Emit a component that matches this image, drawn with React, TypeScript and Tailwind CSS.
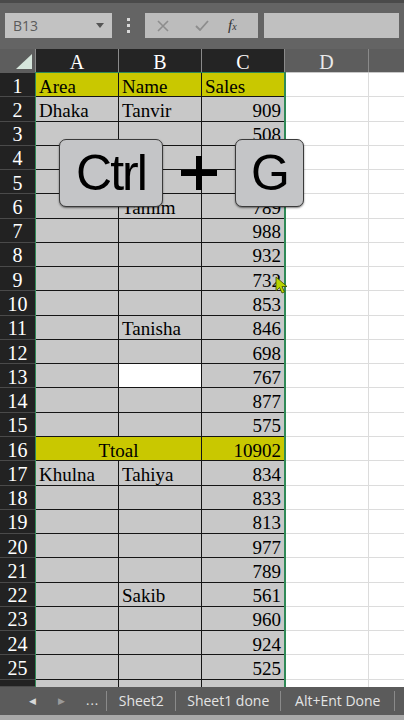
import React from 'react';

const SERIF = { fontFamily: '"Liberation Serif", "Times New Roman", serif' };
const SANS = { fontFamily: '"Open Sans", "Noto Sans", sans-serif' };

type Row = { a?: string; b?: string; c?: string; kind?: 'head' | 'total' };

const ROWS: Row[] = [
  { a: 'Area', b: 'Name', c: 'Sales', kind: 'head' },
  { a: 'Dhaka', b: 'Tanvir', c: '909' },
  { c: '508' },
  {},
  {},
  { b: 'Tamim', c: '789' },
  { c: '988' },
  { c: '932' },
  { c: '732' },
  { c: '853' },
  { b: 'Tanisha', c: '846' },
  { c: '698' },
  { c: '767' },
  { c: '877' },
  { c: '575' },
  { a: 'Ttoal', c: '10902', kind: 'total' },
  { a: 'Khulna', b: 'Tahiya', c: '834' },
  { c: '833' },
  { c: '813' },
  { c: '977' },
  { c: '789' },
  { b: 'Sakib', c: '561' },
  { c: '960' },
  { c: '924' },
  { c: '525' },
];

function RowHeader({ n, partial }: { n?: number; partial?: boolean }) {
  return (
    <div
      className={`flex w-[35px] shrink-0 items-center justify-center border-b border-[#4a4a4a] bg-[#222222] pt-[2px] text-[20px] leading-none text-white ${partial ? 'h-[7px]' : 'h-full'}`}
      style={SERIF}
    >
      {n}
    </div>
  );
}

function DataRow({ n, row }: { n: number; row: Row }) {
  const yellow = row.kind === 'head' || row.kind === 'total';
  const fill = yellow ? 'bg-[#c9c800]' : 'bg-[#c8c8c8]';
  const cell = `h-full shrink-0 border-r border-b border-[#151515] ${fill} px-[3px] pt-[3px] flex items-center text-[19px] leading-none text-black overflow-hidden whitespace-nowrap`;
  return (
    <div className="flex h-[24.28px] shrink-0" style={SERIF}>
      <RowHeader n={n} />
      <div className="h-full w-[1px] shrink-0 bg-[#2f8a57]" />
      {row.kind === 'total' ? (
        <div className={`${cell} w-[166px] justify-center`}>{row.a}</div>
      ) : (
        <>
          <div className={`${cell} w-[83px]`}>{row.a}</div>
          <div
            className={`${cell} w-[83px] ${n === 13 ? '!bg-white' : ''}`}
          >
            {row.b}
          </div>
        </>
      )}
      <div
        className={`${cell} w-[82px] border-r-0 ${row.kind === 'head' ? 'justify-start' : 'justify-end'}`}
      >
        {row.c}
      </div>
      <div className="h-full w-[2px] shrink-0 bg-[#2f8a57]" />
      <div className="h-full w-[83px] shrink-0 border-r border-b border-[#dcdcdc] bg-white" />
      <div className="h-full flex-1 border-b border-[#dcdcdc] bg-white" />
    </div>
  );
}

function Key({ label, w }: { label: string; w: string }) {
  return (
    <div
      className={`flex h-[68px] ${w} items-center justify-center rounded-[7px] border border-[#3a3a3a] bg-[#c4c5c7] text-[50px] leading-none tracking-[-2px] text-black shadow-[0_1px_2px_rgba(0,0,0,0.5)]`}
      style={{ fontFamily: '"Liberation Sans", Arial, sans-serif' }}
    >
      {label}
    </div>
  );
}

export default function App() {
  return (
    <div className="relative h-[720px] w-[404px] overflow-hidden bg-[#646464]">
      {/* formula bar */}
      <div className="h-[3px] bg-[#4a4a4a]" />
      <div className="flex h-[46px] items-start px-[5px] pt-[10px]">
        <div
          className="flex h-[25px] w-[107px] items-center justify-between bg-[#c2c2c2] px-[8px] text-[14px] text-[#5b5b5b]"
          style={SANS}
        >
          <span>B13</span>
          <svg width="8" height="5" viewBox="0 0 8 5">
            <path d="M0 0h8L4 5z" fill="#555" />
          </svg>
        </div>
        <div className="flex h-[25px] w-[33px] flex-col items-center justify-center gap-[3px]">
          <span className="block h-[3px] w-[3px] bg-[#d8d8d8]" />
          <span className="block h-[3px] w-[3px] bg-[#d8d8d8]" />
          <span className="block h-[3px] w-[3px] bg-[#d8d8d8]" />
        </div>
        <div className="flex h-[25px] w-[113px] items-center bg-[#bcbcbc]">
          <svg className="ml-[12px]" width="12" height="12" viewBox="0 0 12 12">
            <path d="M1 1l10 10M11 1L1 11" stroke="#8d8d8d" strokeWidth="1.6" />
          </svg>
          <svg className="ml-[26px]" width="14" height="11" viewBox="0 0 14 11">
            <path d="M1 6l4 4 8-9" stroke="#8d8d8d" strokeWidth="1.8" fill="none" />
          </svg>
          <span className="ml-[19px] text-[15px] italic text-[#333]" style={SERIF}>
            f<span className="text-[10px]">x</span>
          </span>
        </div>
        <div className="ml-[6px] h-[25px] flex-1 bg-[#c0c0c0]" />
      </div>

      {/* column headers */}
      <div className="flex h-[23px]" style={SERIF}>
        <div className="relative w-[35px] shrink-0 bg-[#5d5d5d]">
          <svg className="absolute left-[16px] top-[5px]" width="16" height="15" viewBox="0 0 16 15">
            <path d="M16 0V15H0z" fill="#d6e6dc" />
          </svg>
        </div>
        {['A', 'B', 'C'].map((c) => (
          <div
            key={c}
            className="flex w-[83px] shrink-0 items-center justify-center border-l border-[#8a8a8a] bg-[#242424] pt-[2px] text-[20px] text-white"
          >
            {c}
          </div>
        ))}
        <div className="flex w-[84px] shrink-0 items-center justify-center border-l border-[#8a8a8a] bg-[#5d5d5d] pt-[2px] text-[20px] text-[#e9e9e9]">
          D
        </div>
        <div className="flex-1 border-l border-[#8a8a8a] bg-[#5d5d5d]" />
      </div>
      <div className="flex h-[1px]">
        <div className="w-[35px] bg-[#5d5d5d]" />
        <div className="w-[251px] bg-[#2f8a57]" />
        <div className="flex-1 bg-[#c8c8c8]" />
      </div>

      {/* rows */}
      <div className="flex flex-col">
        {ROWS.map((r, i) => (
          <DataRow key={i} n={i + 1} row={r} />
        ))}
        <div className="flex h-[7px] overflow-hidden">
          <RowHeader partial />
          <div className="h-full w-[1px] bg-[#2f8a57]" />
          <div className="h-full w-[83px] border-r border-[#151515] bg-[#c8c8c8]" />
          <div className="h-full w-[83px] border-r border-[#151515] bg-[#c8c8c8]" />
          <div className="h-full w-[82px] bg-[#c8c8c8]" />
          <div className="h-full w-[2px] bg-[#2f8a57]" />
          <div className="h-full w-[83px] border-r border-[#dcdcdc] bg-white" />
          <div className="h-full flex-1 bg-white" />
        </div>
      </div>

      {/* sheet tabs */}
      <div
        className="flex h-[28px] items-center bg-[#5b5b5b] text-[14px] text-[#e4e4e4]"
        style={SANS}
      >
        <span className="ml-[29px] text-[9px] text-[#d8d8d8]">◀</span>
        <span className="ml-[22px] text-[9px] text-[#9a9a9a]">▶</span>
        <span className="ml-[21px] text-[13px] tracking-[1px]">...</span>
        <span className="ml-[7px] h-[20px] w-[1px] bg-[#8a8a8a]" />
        <span className="w-[68px] text-center">Sheet2</span>
        <span className="h-[20px] w-[1px] bg-[#8a8a8a]" />
        <span className="w-[104px] text-center">Sheet1 done</span>
        <span className="h-[20px] w-[1px] bg-[#8a8a8a]" />
        <span className="w-[113px] text-center">Alt+Ent Done</span>
        <span className="h-[20px] w-[1px] bg-[#8a8a8a]" />
      </div>
      <div className="h-[10px] bg-[#a9a9a9]" />

      {/* Ctrl + G overlay */}
      <div className="absolute left-[59px] top-[139px] flex items-center">
        <Key label="Ctrl" w="w-[104px]" />
        <svg className="mx-[18px]" width="36" height="34" viewBox="0 0 36 34">
          <path d="M0 14h36v6H0zM15 0h6v34h-6z" fill="#000" />
        </svg>
        <Key label="G" w="w-[69px]" />
      </div>

      {/* mouse pointer */}
      <svg className="absolute left-[275px] top-[276px]" width="14" height="20" viewBox="0 0 14 20">
        <path
          d="M1 1L1 15L4.5 11.5L7 17L9.5 16L7 10.5L12 10.5Z"
          fill="#b8d400"
          stroke="#3a4a00"
          strokeWidth="0.8"
          strokeLinejoin="round"
        />
      </svg>
    </div>
  );
}
